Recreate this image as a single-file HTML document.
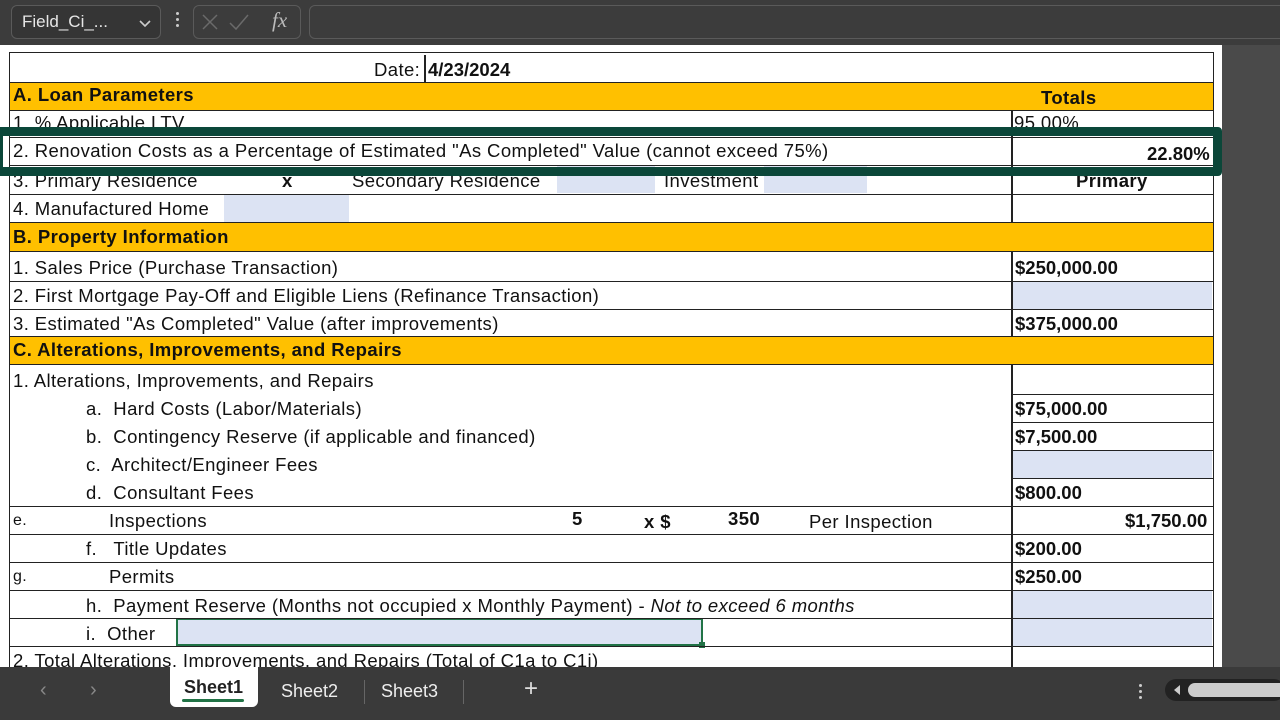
<!DOCTYPE html>
<html><head><meta charset="utf-8"><style>
*{margin:0;padding:0;box-sizing:border-box}
body{width:1280px;height:720px;overflow:hidden;background:#4a4a4a;font-family:"Liberation Sans",Arial,sans-serif;position:relative}
.a{position:absolute;white-space:nowrap}
.t{font-size:18.5px;color:#111;line-height:1;letter-spacing:0.4px}
.b{font-weight:bold}
.hl{position:absolute;border-top:1.5px solid #222;height:0}
.bl{background:#dce3f3;position:absolute}
.or{position:absolute;background:#ffc000;left:10px;width:1203px}
</style></head><body>
<!-- top bar -->
<div class="a" style="left:0;top:0;width:1280px;height:45px;background:#3c3c3c"></div>
<div class="a" style="left:11px;top:5px;width:150px;height:34px;border:1px solid #5a5a5a;border-radius:6px;background:#353535"></div>
<div class="a" style="left:22px;top:12px;font-size:17px;color:#e6e6e6">Field_Ci_...</div>
<svg class="a" style="left:138px;top:16px" width="14" height="14"><path d="M2 5 L7 10 L12 5" stroke="#ccc" stroke-width="1.6" fill="none"/></svg>
<div class="a" style="left:176px;top:12px;width:3px;height:3px;background:#ccc;border-radius:2px;box-shadow:0 6px 0 #ccc,0 12px 0 #ccc"></div>
<div class="a" style="left:193px;top:5px;width:108px;height:34px;border:1px solid #5a5a5a;border-radius:6px"></div>
<svg class="a" style="left:200px;top:12px" width="60" height="20"><path d="M3 3 L17 17 M17 3 L3 17" stroke="#6a6a6a" stroke-width="1.5"/><path d="M30 11 L36 17 L48 3" stroke="#6a6a6a" stroke-width="1.5" fill="none"/></svg>
<div class="a" style="left:272px;top:8px;font-size:21px;color:#bbb;font-style:italic;font-family:'Liberation Serif',serif">fx</div>
<div class="a" style="left:309px;top:5px;width:980px;height:34px;border:1px solid #5a5a5a;border-radius:6px"></div>
<!-- sheet -->
<div class="a" style="left:0;top:45px;width:1222px;height:622px;background:#fff"></div>
<div class="a" style="left:9px;top:52px;width:1205px;height:615px;border-left:1.5px solid #222;border-right:1.5px solid #222;border-top:1.5px solid #222"></div>
<div class="or" style="top:82px;height:28px"></div>
<div class="or" style="top:222px;height:29px"></div>
<div class="or" style="top:336px;height:28px"></div>
<!-- blue cells -->
<div class="bl" style="left:224px;top:195px;width:125px;height:27px"></div>
<div class="bl" style="left:557px;top:166px;width:98px;height:27px"></div>
<div class="bl" style="left:764px;top:166px;width:103px;height:27px"></div>
<div class="bl" style="left:1012px;top:281px;width:200px;height:28px"></div>
<div class="bl" style="left:1012px;top:450px;width:200px;height:28px"></div>
<div class="bl" style="left:1012px;top:590px;width:200px;height:56px"></div>
<div class="bl" style="left:176px;top:618px;width:527px;height:28px;border:2px solid #217346"></div>
<div class="a" style="left:699px;top:642px;width:6px;height:6px;background:#217346"></div>
<!-- horizontal lines -->
<div class="hl" style="left:10px;top:82px;width:1203px"></div>
<div class="hl" style="left:10px;top:110px;width:1203px"></div>
<div class="hl" style="left:10px;top:137px;width:1203px"></div>
<div class="hl" style="left:10px;top:165px;width:1203px"></div>
<div class="hl" style="left:10px;top:194px;width:1203px"></div>
<div class="hl" style="left:10px;top:222px;width:1203px"></div>
<div class="hl" style="left:10px;top:251px;width:1203px"></div>
<div class="hl" style="left:10px;top:281px;width:1203px"></div>
<div class="hl" style="left:10px;top:309px;width:1203px"></div>
<div class="hl" style="left:10px;top:336px;width:1203px"></div>
<div class="hl" style="left:10px;top:364px;width:1203px"></div>
<div class="hl" style="left:1011px;top:394px;width:202px"></div>
<div class="hl" style="left:1011px;top:422px;width:202px"></div>
<div class="hl" style="left:1011px;top:450px;width:202px"></div>
<div class="hl" style="left:1011px;top:478px;width:202px"></div>
<div class="hl" style="left:10px;top:506px;width:1203px"></div>
<div class="hl" style="left:10px;top:534px;width:1203px"></div>
<div class="hl" style="left:10px;top:562px;width:1203px"></div>
<div class="hl" style="left:10px;top:590px;width:1203px"></div>
<div class="hl" style="left:10px;top:618px;width:1203px"></div>
<div class="hl" style="left:10px;top:646px;width:1203px"></div>
<!-- vertical lines -->
<div class="a" style="left:424px;top:55px;width:1.5px;height:27px;background:#222"></div>
<div class="a" style="left:1011px;top:110px;width:1.5px;height:112px;background:#222"></div>
<div class="a" style="left:1011px;top:251px;width:1.5px;height:85px;background:#222"></div>
<div class="a" style="left:1011px;top:364px;width:1.5px;height:303px;background:#222"></div>
<!-- text -->
<div class="a t" style="left:374px;top:61px">Date:</div>
<div class="a t b" style="left:428px;top:61px;letter-spacing:0">4/23/2024</div>
<div class="a t b" style="left:13px;top:86px">A. Loan Parameters</div>
<div class="a t b" style="left:1041px;top:89px">Totals</div>
<div class="a t" style="left:13px;top:114px">1. % Applicable LTV</div>
<div class="a t" style="left:1014px;top:114px">95.00%</div>
<div class="a t" style="left:13px;top:142px">2. Renovation Costs as a Percentage of Estimated "As Completed" Value (cannot exceed 75%)</div>
<div class="a t b" style="left:1147px;top:145px;letter-spacing:0">22.80%</div>
<div class="a t" style="left:13px;top:172px">3. Primary Residence</div>
<div class="a t b" style="left:282px;top:172px">x</div>
<div class="a t" style="left:352px;top:172px">Secondary Residence</div>
<div class="a t" style="left:664px;top:172px">Investment</div>
<div class="a t b" style="left:1076px;top:172px">Primary</div>
<div class="a t" style="left:13px;top:200px">4. Manufactured Home</div>
<div class="a t b" style="left:13px;top:228px">B. Property Information</div>
<div class="a t" style="left:13px;top:259px">1. Sales Price (Purchase Transaction)</div>
<div class="a t b" style="left:1015px;top:259px;letter-spacing:0">$250,000.00</div>
<div class="a t" style="left:13px;top:287px">2. First Mortgage Pay-Off and Eligible Liens (Refinance Transaction)</div>
<div class="a t" style="left:13px;top:315px">3. Estimated "As Completed" Value (after improvements)</div>
<div class="a t b" style="left:1015px;top:315px;letter-spacing:0">$375,000.00</div>
<div class="a t b" style="left:13px;top:341px">C. Alterations, Improvements, and Repairs</div>
<div class="a t" style="left:13px;top:372px">1. Alterations, Improvements, and Repairs</div>
<div class="a t" style="left:86px;top:400px">a.&nbsp; Hard Costs (Labor/Materials)</div>
<div class="a t b" style="left:1015px;top:400px;letter-spacing:0">$75,000.00</div>
<div class="a t" style="left:86px;top:428px">b.&nbsp; Contingency Reserve (if applicable and financed)</div>
<div class="a t b" style="left:1015px;top:428px;letter-spacing:0">$7,500.00</div>
<div class="a t" style="left:86px;top:456px">c.&nbsp; Architect/Engineer Fees</div>
<div class="a t" style="left:86px;top:484px">d.&nbsp; Consultant Fees</div>
<div class="a t b" style="left:1015px;top:484px;letter-spacing:0">$800.00</div>
<div class="a t" style="left:13px;top:513px;font-size:16px">e.</div>
<div class="a t" style="left:109px;top:512px">Inspections</div>
<div class="a t b" style="left:572px;top:510px">5</div>
<div class="a t b" style="left:644px;top:513px">x $</div>
<div class="a t b" style="left:728px;top:510px">350</div>
<div class="a t" style="left:809px;top:513px">Per Inspection</div>
<div class="a t b" style="left:1125px;top:512px;letter-spacing:0">$1,750.00</div>
<div class="a t" style="left:86px;top:540px">f.&nbsp;&nbsp; Title Updates</div>
<div class="a t b" style="left:1015px;top:540px;letter-spacing:0">$200.00</div>
<div class="a t" style="left:13px;top:569px;font-size:16px">g.</div>
<div class="a t" style="left:109px;top:568px">Permits</div>
<div class="a t b" style="left:1015px;top:568px;letter-spacing:0">$250.00</div>
<div class="a t" style="left:86px;top:597px">h.&nbsp; Payment Reserve (Months not occupied x Monthly Payment) - <i>Not to exceed 6 months</i></div>
<div class="a t" style="left:86px;top:625px">i.&nbsp; Other</div>
<div class="a t" style="left:13px;top:652px">2. Total Alterations, Improvements, and Repairs (Total of C1a to C1i)</div>
<!-- highlight box -->
<div class="a" style="left:-6px;top:127px;width:1228px;height:49px;border:9px solid #0b4739;border-radius:4px"></div>
<!-- bottom bar -->
<div class="a" style="left:0;top:667px;width:1280px;height:53px;background:#3a3a3a"></div>
<div class="a" style="left:40px;top:679px;font-size:20px;color:#888">&#8249;</div>
<div class="a" style="left:90px;top:679px;font-size:20px;color:#888">&#8250;</div>
<div class="a" style="left:170px;top:667px;width:88px;height:40px;background:#fff;border-radius:0 0 6px 6px"></div>
<div class="a" style="left:184px;top:677px;font-size:18px;color:#222;font-weight:bold">Sheet1</div>
<div class="a" style="left:182px;top:699px;width:62px;height:3px;background:#217346;border-radius:2px"></div>
<div class="a" style="left:281px;top:681px;font-size:18px;color:#eee">Sheet2</div>
<div class="a" style="left:364px;top:680px;width:1px;height:24px;background:#666"></div>
<div class="a" style="left:381px;top:681px;font-size:18px;color:#eee">Sheet3</div>
<div class="a" style="left:463px;top:680px;width:1px;height:24px;background:#666"></div>
<div class="a" style="left:524px;top:675px;font-size:24px;color:#ddd">+</div>
<div class="a" style="left:1139px;top:684px;width:3px;height:3px;background:#ccc;border-radius:2px;box-shadow:0 6px 0 #ccc,0 12px 0 #ccc"></div>
<div class="a" style="left:1165px;top:679px;width:120px;height:22px;background:#222;border-radius:11px"></div>
<div class="a" style="left:1188px;top:683px;width:100px;height:14px;background:#ccc;border-radius:7px"></div>
<svg class="a" style="left:1172px;top:684px" width="10" height="12"><path d="M8 1 L2 6 L8 11Z" fill="#ccc"/></svg>
</body></html>
